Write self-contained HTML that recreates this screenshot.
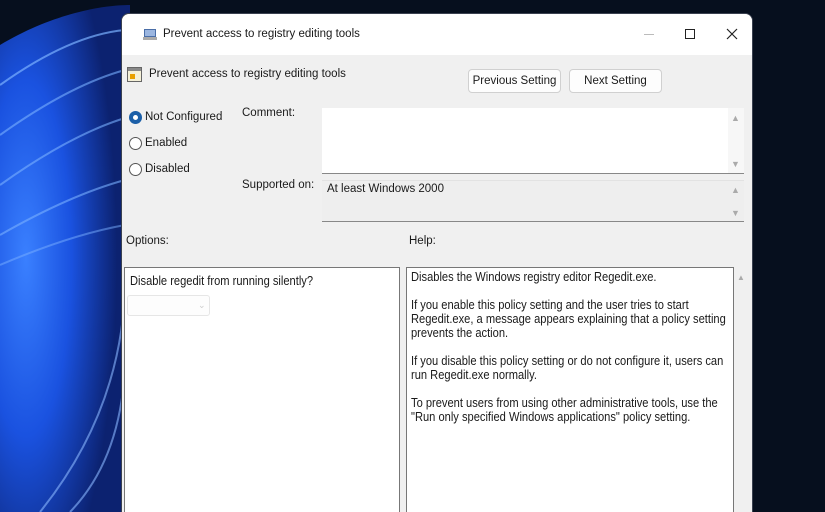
<!DOCTYPE html>
<html><head><style>
*{margin:0;padding:0;box-sizing:border-box}
html,body{width:825px;height:512px;overflow:hidden}
body{position:relative;background:#060f1e;font-family:"Liberation Sans",sans-serif;font-size:11.5px;line-height:17px;color:#1a1a1a}
.abs{position:absolute}
.win{left:121px;top:13px;width:632px;height:499px;background:#f0f0f0;border-radius:8px 8px 0 0;overflow:hidden;border:1px solid #3a4150;border-bottom:none}
.title{left:0;top:0;width:100%;height:41px;background:#fff}
.btn{background:#fdfdfd;border:1px solid #d0d0d0;border-radius:4px;text-align:center;line-height:22px;font-size:11.5px}
.radio{width:13px;height:13px;border-radius:50%;border:1px solid #555;background:#fff}
.sel{border:4px solid #1b5fa8}
.narrow{transform-origin:0 0;transform:scaleX(0.89);white-space:nowrap;line-height:14px;font-size:12.5px}
</style></head><body>
<svg class="abs" style="left:0;top:0" width="825" height="512">
<defs>
<radialGradient id="g" cx="0.2" cy="0.5" r="0.7">
<stop offset="0" stop-color="#3a80ff"/><stop offset="0.5" stop-color="#1a52e0"/><stop offset="1" stop-color="#0c2270"/></radialGradient>
</defs>
<rect width="825" height="512" fill="#060f1e"/>
<path d="M0 45 C50 15 100 5 130 5 L130 512 L0 512Z" fill="url(#g)"/>
<path d="M0 85 Q70 35 125 30" stroke="#7ab0ff" stroke-width="2" fill="none" opacity=".7"/>
<path d="M0 135 Q70 85 125 70" stroke="#7ab0ff" stroke-width="2" fill="none" opacity=".6"/>
<path d="M0 185 Q70 135 125 118" stroke="#7ab0ff" stroke-width="2" fill="none" opacity=".6"/>
<path d="M0 235 Q70 195 125 180" stroke="#7ab0ff" stroke-width="2" fill="none" opacity=".6"/>
<path d="M0 265 Q70 235 125 225" stroke="#7ab0ff" stroke-width="2" fill="none" opacity=".5"/>
<path d="M40 512 Q130 400 125 260" stroke="#8ab8ff" stroke-width="2" fill="none" opacity=".6"/>
<path d="M70 512 Q130 450 125 330" stroke="#8ab8ff" stroke-width="2" fill="none" opacity=".6"/>
</svg>
<div class="abs win">
 <div class="abs title">
  <svg class="abs" style="left:21px;top:13px" width="14" height="14"><rect x="1" y="2" width="12" height="8" fill="#4a6ea8"/><rect x="2" y="3" width="10" height="6" fill="#9bb6e0"/><rect x="0" y="10" width="14" height="3" fill="#aaa"/></svg>
  <div class="abs" style="left:41px;top:12px">Prevent access to registry editing tools</div>
  <div class="abs" style="left:522px;top:20px;width:10px;height:1px;background:#bbb"></div>
  <div class="abs" style="left:563px;top:15px;width:10px;height:10px;border:1px solid #222"></div>
  <svg class="abs" style="left:604px;top:14px" width="12" height="12"><path d="M1 1L11 11M11 1L1 11" stroke="#222" stroke-width="1.2"/></svg>
 </div>
 <svg class="abs" style="left:5px;top:53px" width="16" height="16"><rect x="0.5" y="0.5" width="14" height="14" fill="#f4f0d8" stroke="#666"/><rect x="1" y="1" width="13" height="3" fill="#888"/><rect x="3" y="7" width="5" height="5" fill="#e8a000"/></svg>
 <div class="abs" style="left:27px;top:52px">Prevent access to registry editing tools</div>
 <div class="abs btn" style="left:346px;top:55px;width:93px;height:24px">Previous Setting</div>
 <div class="abs btn" style="left:447px;top:55px;width:93px;height:24px">Next Setting</div>
 <div class="abs radio sel" style="left:7px;top:97px"></div><div class="abs" style="left:23px;top:95px">Not Configured</div>
 <div class="abs radio" style="left:7px;top:123px"></div><div class="abs" style="left:23px;top:121px">Enabled</div>
 <div class="abs radio" style="left:7px;top:149px"></div><div class="abs" style="left:23px;top:147px">Disabled</div>
 <div class="abs" style="left:120px;top:91px">Comment:</div>
 <div class="abs" style="left:200px;top:94px;width:422px;height:66px;background:#fff;border-bottom:1px solid #888"></div>
 <div class="abs" style="left:606px;top:94px;width:16px;height:65px;background:#f7f7f7"></div>
 <div class="abs" style="left:609px;top:96px;color:#aaa;font-size:9px">▲</div>
 <div class="abs" style="left:609px;top:142px;color:#aaa;font-size:9px">▼</div>
 <div class="abs" style="left:120px;top:163px">Supported on:</div>
 <div class="abs" style="left:200px;top:166px;width:422px;height:42px;background:#eeeeee;border-bottom:1px solid #888;border-top:1px solid #e2e2e2"></div>
 <div class="abs" style="left:205px;top:167px">At least Windows 2000</div>
 <div class="abs" style="left:609px;top:168px;color:#aaa;font-size:9px">▲</div>
 <div class="abs" style="left:609px;top:191px;color:#aaa;font-size:9px">▼</div>
 <div class="abs" style="left:4px;top:219px">Options:</div>
 <div class="abs" style="left:287px;top:219px">Help:</div>
 <div class="abs" style="left:2px;top:253px;width:276px;height:250px;background:#fff;border:1px solid #777"></div>
 <div class="abs narrow" style="left:8px;top:260px">Disable regedit from running silently?</div>
 <div class="abs" style="left:5px;top:281px;width:83px;height:21px;border:1px solid #e6e6e6;border-radius:3px;background:#fdfdfd"></div>
 <div class="abs" style="left:76px;top:283px;color:#ccc;font-size:9px">⌄</div>
 <div class="abs" style="left:284px;top:253px;width:328px;height:250px;background:#fff;border:1px solid #777"></div>
 <div class="abs" style="left:615px;top:255px;color:#aaa;font-size:8px">▲</div>
 <div class="abs narrow" style="left:289px;top:256px">Disables the Windows registry editor Regedit.exe.<br><br>If you enable this policy setting and the user tries to start<br>Regedit.exe, a message appears explaining that a policy setting<br>prevents the action.<br><br>If you disable this policy setting or do not configure it, users can<br>run Regedit.exe normally.<br><br>To prevent users from using other administrative tools, use the<br>"Run only specified Windows applications" policy setting.</div>
</div>
</body></html>
